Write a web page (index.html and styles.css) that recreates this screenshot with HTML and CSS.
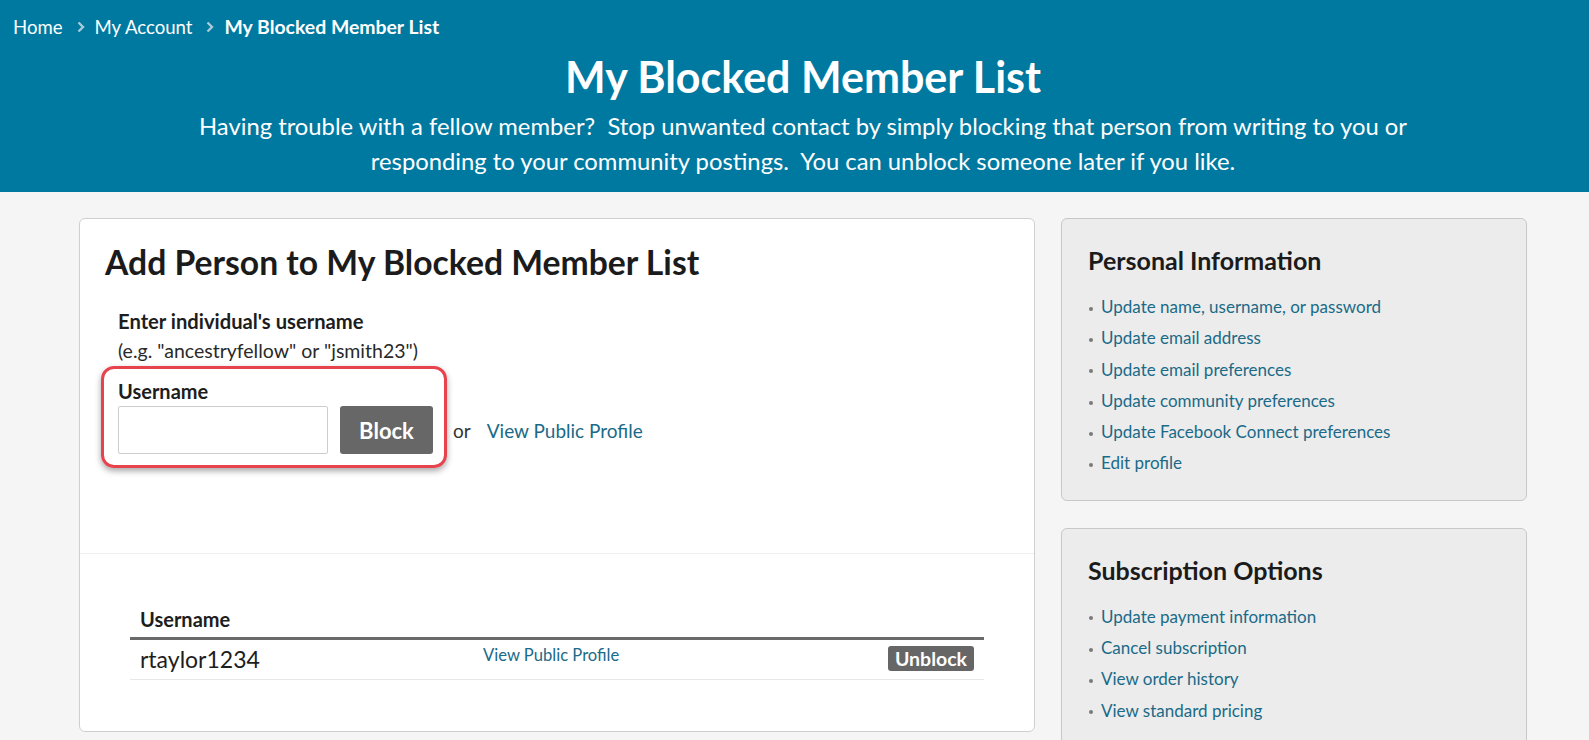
FILE: index.html
```html
<!DOCTYPE html>
<html lang="en">
<head>
<meta charset="utf-8">
<title>My Blocked Member List</title>
<link rel="stylesheet" href="styles.css">
</head>
<body>
<header class="hero">
  <nav class="crumbs">
    <a class="crumb" href="#">Home</a>
    <svg class="chev" viewBox="0 0 8 12" width="8" height="12"><path d="M1.5 1.5 L6 6 L1.5 10.5" fill="none" stroke="currentColor" stroke-width="2.4"/></svg>
    <a class="crumb" href="#">My Account</a>
    <svg class="chev" viewBox="0 0 8 12" width="8" height="12"><path d="M1.5 1.5 L6 6 L1.5 10.5" fill="none" stroke="currentColor" stroke-width="2.4"/></svg>
    <span class="crumb current">My Blocked Member List</span>
  </nav>
  <div class="hero-text">
    <h1 class="hero-title">My Blocked Member List</h1>
    <p class="hero-sub">Having trouble with a fellow member?&nbsp; Stop unwanted contact by simply blocking that person from writing to you or<br>responding to your community postings.&nbsp; You can unblock someone later if you like.</p>
  </div>
</header>

<main class="layout">
  <section class="card main-card">
    <div class="add-section">
      <h2 class="card-title">Add Person to My Blocked Member List</h2>
      <div class="form">
        <p class="form-label">Enter individual's username</p>
        <p class="form-hint">(e.g. "ancestryfellow" or "jsmith23")</p>
        <div class="field">
          <span class="annotation"></span>
          <label class="field-label" for="uname">Username</label>
          <div class="field-row">
            <input class="text-input" id="uname" type="text">
            <button class="btn-block" type="button">Block</button>
            <span class="or">or</span>
            <a class="link profile-link" href="#">View Public Profile</a>
          </div>
        </div>
      </div>
    </div>
    <div class="list-section">
      <table class="blocked-table">
        <colgroup><col class="c1"><col class="c2"><col class="c3"></colgroup>
        <thead>
          <tr><th>Username</th><th></th><th></th></tr>
        </thead>
        <tbody>
          <tr>
            <td class="uname-cell">rtaylor1234</td>
            <td class="link-cell"><a class="link" href="#">View Public Profile</a></td>
            <td class="action-cell"><button class="btn-unblock" type="button">Unblock</button></td>
          </tr>
        </tbody>
      </table>
    </div>
  </section>

  <aside class="sidebar">
    <section class="card side-card">
      <h3 class="side-title">Personal Information</h3>
      <ul class="side-list">
        <li><a class="link" href="#">Update name, username, or password</a></li>
        <li><a class="link" href="#">Update email address</a></li>
        <li><a class="link" href="#">Update email preferences</a></li>
        <li><a class="link" href="#">Update community preferences</a></li>
        <li><a class="link" href="#">Update Facebook Connect preferences</a></li>
        <li><a class="link" href="#">Edit profile</a></li>
      </ul>
    </section>
    <section class="card side-card">
      <h3 class="side-title">Subscription Options</h3>
      <ul class="side-list">
        <li><a class="link" href="#">Update payment information</a></li>
        <li><a class="link" href="#">Cancel subscription</a></li>
        <li><a class="link" href="#">View order history</a></li>
        <li><a class="link" href="#">View standard pricing</a></li>
      </ul>
    </section>
  </aside>
</main>
</body>
</html>
```

FILE: styles.css
```css
* { box-sizing: border-box; }

html, body { margin: 0; padding: 0; }

body {
  background: #f5f5f5;
  color: #1d1d1d;
  font-family: Lato, "Open Sans", "Liberation Sans", sans-serif;
  overflow: hidden;
}

p, h1, h2, h3, ul { margin: 0; padding: 0; }

a { text-decoration: none; }

/* ---------- header ---------- */
.hero {
  background: #0079a1;
  color: #fff;
  padding: 15px 0 13px;
  height: 192px;
}

.crumbs {
  display: flex;
  align-items: center;
  padding-left: 13px;
  font-size: 18.6px;
  line-height: 24px;
}

.crumb { color: #fff; }
.crumb.current { font-weight: 700; font-size: 19.4px; }

.chev {
  color: #a9cbd9;
  margin: 0 10px 0 14px;
}

.hero-text {
  padding-left: 17px;
  text-align: center;
}

.hero-title {
  margin-top: 14px;
  font-size: 43px;
  line-height: 48px;
  font-weight: 700;
}

.hero-sub {
  margin-top: 8px;
  font-size: 23.8px;
  line-height: 35px;
}

/* ---------- layout ---------- */
.layout {
  display: grid;
  grid-template-columns: 956px 466px;
  column-gap: 26px;
  align-items: start;
  padding: 26px 0 0 79px;
}

.card {
  border: 1px solid #cfcfcf;
  border-radius: 6px;
}

.main-card { background: #fff; }

.add-section {
  padding: 23px 25px 99px;
  border-bottom: 1px solid #efefef;
}

.card-title {
  font-size: 33.7px;
  line-height: 40px;
  font-weight: 700;
  color: #1b1b1b;
}

.form {
  margin-top: 25px;
  padding-left: 13px;
  font-size: 19.5px;
  line-height: 29px;
}

.form-label { font-weight: 700; font-size: 20.2px; }

.form-hint { color: #2a2a2a; }

.field {
  position: relative;
  margin-top: 12px;
}

.annotation {
  position: absolute;
  left: -17px;
  top: -11px;
  width: 346px;
  height: 102px;
  border: 3px solid #e6434d;
  border-radius: 13px;
  box-shadow: 0 3px 6px rgba(0, 0, 0, 0.35);
  pointer-events: none;
}

.field-label {
  display: block;
  font-weight: 700;
  font-size: 20px;
}

.field-row {
  display: flex;
  align-items: center;
}

.text-input {
  width: 210px;
  height: 48px;
  border: 1px solid #cdcdcd;
  border-radius: 2px;
  background: #fff;
  font: inherit;
}

.btn-block {
  margin-left: 12px;
  width: 93px;
  height: 48px;
  border: 0;
  border-radius: 3px;
  background: #676767;
  color: #fff;
  font-family: inherit;
  font-size: 22px;
  font-weight: 700;
}

.or {
  margin-left: 20px;
  font-size: 19px;
  color: #333;
}

.link { color: #1a6a88; }

.profile-link {
  margin-left: 16px;
  font-size: 19px;
}

/* ---------- table ---------- */
.list-section {
  padding: 53px 50px 51px;
}

.blocked-table {
  width: 100%;
  border-collapse: collapse;
  table-layout: fixed;
}

.c1 { width: 343px; }
.c2 { width: 300px; }

.blocked-table th {
  text-align: left;
  font-size: 20px;
  line-height: 24px;
  font-weight: 700;
  padding: 0 10px 6px;
  border-bottom: 3px solid #6a6a6a;
}

.blocked-table td {
  padding: 0 10px;
  vertical-align: top;
  border-bottom: 1px solid #e8e8e8;
  height: 40px;
}

.uname-cell {
  font-size: 23px;
  line-height: 39px;
}

.link-cell {
  font-size: 16.6px;
  line-height: 30px;
}

.action-cell {
  text-align: right;
  padding-top: 6px !important;
}

.btn-unblock {
  height: 25px;
  padding: 0 7px;
  border: 0;
  border-radius: 3px;
  background: #666;
  color: #fff;
  font-family: inherit;
  font-size: 19.5px;
  font-weight: 700;
  line-height: 25px;
}

/* ---------- sidebar ---------- */
.sidebar {
  display: flex;
  flex-direction: column;
  gap: 27px;
}

.side-card {
  background: #ececec;
  border-color: #c8c8c8;
  padding: 26px 26px 21px;
}

.side-title {
  font-size: 25px;
  line-height: 30px;
  font-weight: 700;
  color: #1b1b1b;
}

.side-list {
  list-style: none;
  margin-top: 16px;
  font-size: 17px;
  line-height: 31.3px;
}

.side-list li::before {
  content: "";
  display: inline-block;
  width: 4px;
  height: 4px;
  margin: 0 8px 0 1px;
  border-radius: 50%;
  background: #7a7a7a;
  vertical-align: middle;
}
```
